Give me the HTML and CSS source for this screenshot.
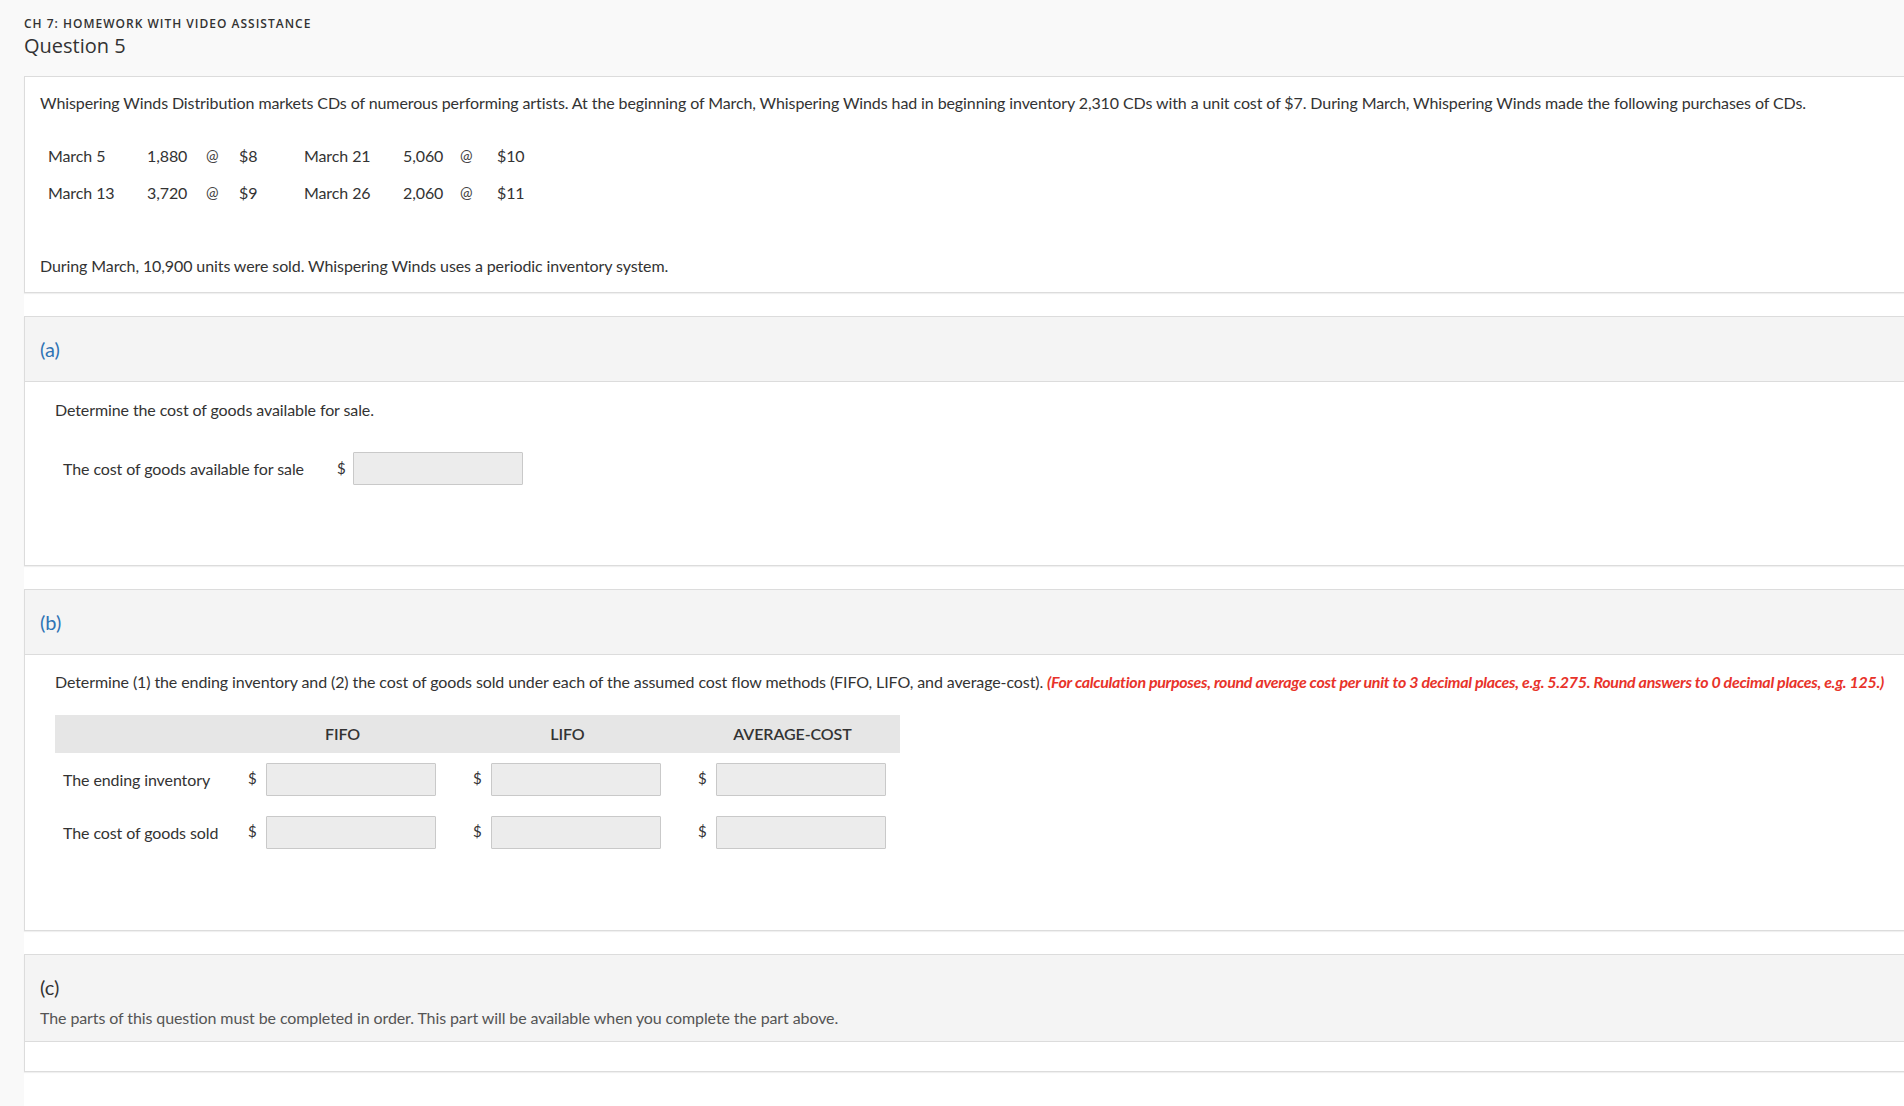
FILE: index.html
```html
<!DOCTYPE html>
<html lang="en">
<head>
<meta charset="utf-8">
<title>Question 5</title>
<link rel="stylesheet" href="styles.css">
</head>
<body>
<header class="page-head">
  <div class="assignment">CH 7: HOMEWORK WITH VIDEO ASSISTANCE</div>
  <h1 class="q-title">Question 5</h1>
</header>
<main class="content">
  <section class="card intro">
    <p class="txt first">Whispering Winds Distribution markets CDs of numerous performing artists. At the beginning of March, Whispering Winds had in beginning inventory 2,310 CDs with a unit cost of $7. During March, Whispering Winds made the following purchases of CDs.</p>
    <div class="purchases">
      <span>March 5</span><span>1,880</span><span class="at">@</span><span>$8</span>
      <span>March 21</span><span>5,060</span><span class="at">@</span><span>$10</span>
      <span>March 13</span><span>3,720</span><span class="at">@</span><span>$9</span>
      <span>March 26</span><span>2,060</span><span class="at">@</span><span>$11</span>
    </div>
    <p class="txt last">During March, 10,900 units were sold. Whispering Winds uses a periodic inventory system.</p>
  </section>

  <section class="card part">
    <div class="part-head"><span class="part-label">(a)</span></div>
    <div class="part-body body-a">
      <p class="txt">Determine the cost of goods available for sale.</p>
      <div class="answer-row">
        <span class="row-label">The cost of goods available for sale</span>
        <span class="dollar">$</span>
        <span class="input"></span>
      </div>
    </div>
  </section>

  <section class="card part">
    <div class="part-head"><span class="part-label">(b)</span></div>
    <div class="part-body body-b">
      <p class="txt one-line">Determine (1) the ending inventory and (2) the cost of goods sold under each of the assumed cost flow methods (FIFO, LIFO, and average-cost). <em class="note">(For calculation purposes, round average cost per unit to 3 decimal places, e.g. 5.275. Round answers to 0 decimal places, e.g. 125.)</em></p>
      <div class="grid">
        <div class="g-head"></div>
        <div class="g-head">FIFO</div>
        <div class="g-head">LIFO</div>
        <div class="g-head g-head-last">AVERAGE-COST</div>

        <div class="g-label r1">The ending inventory</div>
        <div class="g-cell r1"><span class="dollar">$</span><span class="input"></span></div>
        <div class="g-cell r1"><span class="dollar">$</span><span class="input"></span></div>
        <div class="g-cell r1"><span class="dollar">$</span><span class="input"></span></div>

        <div class="g-label r2">The cost of goods sold</div>
        <div class="g-cell r2"><span class="dollar">$</span><span class="input"></span></div>
        <div class="g-cell r2"><span class="dollar">$</span><span class="input"></span></div>
        <div class="g-cell r2"><span class="dollar">$</span><span class="input"></span></div>
      </div>
    </div>
  </section>

  <section class="card part">
    <div class="part-head head-c">
      <div class="part-label dark">(c)</div>
      <p class="locked">The parts of this question must be completed in order. This part will be available when you complete the part above.</p>
    </div>
    <div class="part-body body-c"></div>
  </section>
</main>
</body>
</html>
```

FILE: styles.css
```css
html, body {
  margin: 0;
  padding: 0;
}
body {
  background: #f9f9f9;
  font-family: Lato, "Open Sans", "Liberation Sans", sans-serif;
  color: #333;
  overflow: hidden;
  min-height: 1106px;
}
.page-head {
  padding: 17px 24px 19px;
  font-family: "Open Sans", "Liberation Sans", sans-serif;
}
.assignment {
  font-size: 12px;
  line-height: 14px;
  font-weight: 600;
  letter-spacing: 1px;
  color: #333;
}
.q-title {
  margin: 2px 0 -2px;
  font-size: 20px;
  line-height: 26px;
  font-weight: 400;
  color: #333;
}
.content {
  margin-left: 24px;
  background: #fff;
  min-height: 1030px;
}
.card {
  border: 1px solid #dcdcdc;
  border-right: none;
  box-shadow: 0 1px 1px rgba(0, 0, 0, 0.06);
  background: #fff;
}
.card + .card {
  margin-top: 23px;
}
.txt {
  margin: 0;
  font-size: 16px;
  line-height: 24px;
  letter-spacing: -0.1px;
}
.one-line {
  white-space: nowrap;
}
.intro {
  padding: 14px 15px 14px;
}
.purchases {
  margin-top: 22px;
  margin-left: 8px;
  display: grid;
  grid-template-columns: 99px 59px 33px 65px 99px 57px 37px 60px;
  font-size: 16px;
  line-height: 37px;
  letter-spacing: -0.1px;
}
.purchases .at {
  font-size: 15px;
  color: #444;
}
.intro .last {
  margin-top: 43px;
}
.part-head {
  background: #f4f4f4;
  border-bottom: 1px solid #dcdcdc;
  padding: 20px 15px 20px;
  height: 24px;
}
.part-label {
  display: block;
  font-size: 20px;
  line-height: 24px;
  color: #2f73b5;
}
.part-label.dark {
  color: #333;
}
.part-body {
  padding: 16px 30px 80px;
}
.answer-row {
  margin-top: 30px;
  margin-left: 8px;
  display: flex;
  align-items: center;
  font-size: 16px;
  line-height: 24px;
  letter-spacing: -0.1px;
}
.row-label {
  width: 274px;
}
.dollar {
  width: 16px;
  font-size: 15px;
  align-self: flex-start;
  line-height: 32px;
}
.input {
  display: block;
  width: 168px;
  height: 31px;
  background: #ececec;
  border: 1px solid #c9c9c9;
  border-radius: 1px;
}
.body-b {
  padding-top: 15px;
  padding-bottom: 81px;
}
.note {
  color: #e8332a;
  font-weight: 700;
  font-style: italic;
  letter-spacing: -0.3px;
}
.grid {
  margin-top: 21px;
  width: 832px;
  display: grid;
  grid-template-columns: 157px 189px 189px 189px;
  column-gap: 36px;
  padding-right: 13px;
  font-size: 16px;
  letter-spacing: -0.1px;
}
.g-head {
  background: #e6e6e6;
  height: 38px;
  line-height: 38px;
  text-align: center;
  font-weight: 600;
  font-size: 16px;
  margin-right: -36px;
  padding-right: 36px;
}
.g-head.g-head-last {
  margin-right: -13px;
  padding-right: 13px;
}
.g-label {
  padding-left: 8px;
  line-height: 33px;
  height: 33px;
  white-space: nowrap;
}
.g-cell {
  display: flex;
  align-items: flex-start;
  height: 33px;
}
.g-cell .dollar {
  width: 18px;
  line-height: 30px;
}
.r1 {
  margin-top: 10px;
}
.r2 {
  margin-top: 20px;
}
.head-c {
  height: auto;
  padding: 20px 15px 12px;
}
.locked {
  margin: 8px 0 0;
  font-size: 16px;
  line-height: 22px;
  letter-spacing: -0.1px;
  color: #555;
}
.body-c {
  padding: 0;
  height: 29px;
}
```
